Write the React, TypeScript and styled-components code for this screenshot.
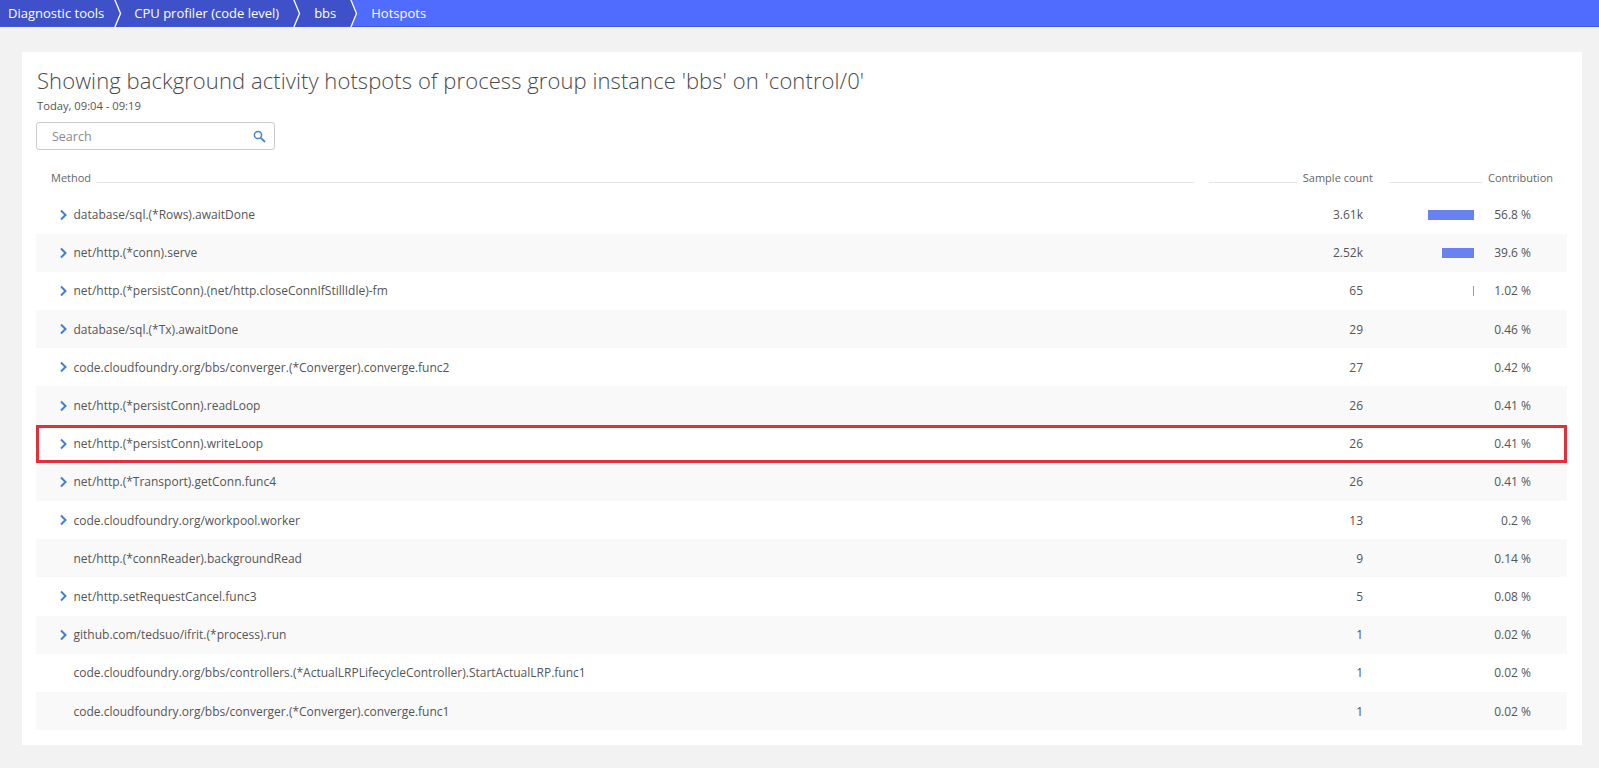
import React from "react";
import styled, { createGlobalStyle } from "styled-components";

const GlobalStyle = createGlobalStyle`
  html, body {
    margin: 0;
    padding: 0;
    background: #f2f2f2;
    font-family: "Open Sans", "Liberation Sans", sans-serif;
    color: #555;
  }
`;

const TopBar = styled.nav`
  display: flex;
  align-items: center;
  height: 27px;
  background: #4f6cff;
  color: #fff;
  font-size: 13px;
  font-weight: 500;
  border-bottom: 1px solid #3f5ae0;
  box-sizing: border-box;
`;

const Crumb = styled.div<{ $current?: boolean; $pad: number }>`
  display: flex;
  align-items: center;
  height: 100%;
  padding-left: ${(p) => p.$pad}px;
  background: ${(p) => (p.$current ? "transparent" : "#3f51c9")};
  white-space: nowrap;
`;

const CrumbArrow = styled.svg`
  display: block;
  flex: none;
  width: 14px;
  height: 27px;
`;

const CrumbGap = styled.div<{ $width: number }>`
  width: ${(p) => p.$width}px;
  flex: none;
  height: 100%;
  background: #3f51c9;
`;

const Page = styled.main`
  padding: 25px 17px 23px 22px;
`;

const Card = styled.section`
  background: #fff;
  padding: 15px 15px 14px 14px;
  height: 693px;
  box-sizing: border-box;
`;

const Title = styled.h1`
  margin: 0 0 0 1px;
  font-size: 22px;
  line-height: 26px;
  font-weight: 300;
  color: #4a4a4a;
  letter-spacing: 0.08px;
`;

const Subtitle = styled.div`
  font-size: 11.2px;
  line-height: 18px;
  margin: 4px 0 0 1px;
  color: #555;
`;

const SearchBox = styled.div`
  display: flex;
  align-items: center;
  justify-content: space-between;
  width: 239px;
  height: 28px;
  margin-top: 7px;
  box-sizing: border-box;
  padding: 0 8px 0 15px;
  border: 1px solid #c9ccd1;
  border-radius: 3px;
  font-size: 12.5px;
  color: #8a8a8a;
`;

const HeadRow = styled.div`
  display: flex;
  align-items: center;
  height: 45px;
  margin-top: 5px;
  font-size: 11px;
  color: #666;
`;

const HeadLabel = styled.div<{ $left?: number; $right?: number }>`
  flex: none;
  white-space: nowrap;
  margin-left: ${(p) => p.$left ?? 0}px;
  margin-right: ${(p) => p.$right ?? 0}px;
`;

const HeadRule = styled.div<{ $width?: number; $gap?: number }>`
  height: 1px;
  margin: 9px 6px 0 ${(p) => p.$gap ?? 2}px;
  background: #e6e6e6;
  flex: ${(p) => (p.$width ? "none" : "1")};
  width: ${(p) => (p.$width ? `${p.$width}px` : "auto")};
`;

const Rows = styled.div`
  display: flex;
  flex-direction: column;
  margin-top: -4.5px;
`;

const Row = styled.div<{ $striped: boolean; $marked: boolean }>`
  position: relative;
  z-index: ${(p) => (p.$marked ? 1 : 0)};
  display: grid;
  grid-template-columns: 1fr 100px 111px 57px;
  align-items: center;
  height: 38.2px;
  padding-right: 36px;
  box-sizing: border-box;
  font-size: 12px;
  color: #555;
  background: ${(p) => (p.$striped ? "#f9f9f9" : "#fff")};
  ${(p) =>
    p.$marked
      ? "outline: 3px solid #e0303a; outline-offset: -3px; background: #fff;"
      : ""}
`;

const MethodCell = styled.div`
  display: flex;
  align-items: center;
  padding-left: 22.5px;
  gap: 6px;
  white-space: nowrap;
`;

const Expander = styled.svg<{ $hidden: boolean }>`
  width: 9px;
  height: 12px;
  flex: none;
  visibility: ${(p) => (p.$hidden ? "hidden" : "visible")};
`;

const CountCell = styled.div`
  text-align: right;
`;

const BarCell = styled.div`
  display: flex;
  justify-content: flex-end;
  align-items: center;
`;

const Bar = styled.div`
  height: 10px;
  background: #6a81f0;
`;

const ThinBar = styled.div`
  width: 1px;
  height: 10px;
  background: #999;
`;

const PercentCell = styled.div`
  text-align: right;
  white-space: nowrap;
`;

type Hotspot = {
  method: string;
  samples: string;
  percent: string;
  expandable: boolean;
  bar?: number;
};

const hotspots: Hotspot[] = [
  { method: "database/sql.(*Rows).awaitDone", samples: "3.61k", percent: "56.8 %", expandable: true, bar: 46 },
  { method: "net/http.(*conn).serve", samples: "2.52k", percent: "39.6 %", expandable: true, bar: 32 },
  { method: "net/http.(*persistConn).(net/http.closeConnIfStillIdle)-fm", samples: "65", percent: "1.02 %", expandable: true, bar: 1 },
  { method: "database/sql.(*Tx).awaitDone", samples: "29", percent: "0.46 %", expandable: true },
  { method: "code.cloudfoundry.org/bbs/converger.(*Converger).converge.func2", samples: "27", percent: "0.42 %", expandable: true },
  { method: "net/http.(*persistConn).readLoop", samples: "26", percent: "0.41 %", expandable: true },
  { method: "net/http.(*persistConn).writeLoop", samples: "26", percent: "0.41 %", expandable: true },
  { method: "net/http.(*Transport).getConn.func4", samples: "26", percent: "0.41 %", expandable: true },
  { method: "code.cloudfoundry.org/workpool.worker", samples: "13", percent: "0.2 %", expandable: true },
  { method: "net/http.(*connReader).backgroundRead", samples: "9", percent: "0.14 %", expandable: false },
  { method: "net/http.setRequestCancel.func3", samples: "5", percent: "0.08 %", expandable: true },
  { method: "github.com/tedsuo/ifrit.(*process).run", samples: "1", percent: "0.02 %", expandable: true },
  { method: "code.cloudfoundry.org/bbs/controllers.(*ActualLRPLifecycleController).StartActualLRP.func1", samples: "1", percent: "0.02 %", expandable: false },
  { method: "code.cloudfoundry.org/bbs/converger.(*Converger).converge.func1", samples: "1", percent: "0.02 %", expandable: false },
];

const Arrow = ({ last }: { last?: boolean }) => (
  <CrumbArrow viewBox="0 0 14 27">
    <polygon points="0,0 2,0 8,13.5 2,27 0,27" fill="#3f51c9" />
    {last ? null : <polygon points="2.6,0 14,0 14,27 2.6,27 8.6,13.5" fill="#3f51c9" />}
    <polyline points="1.5,-1 7.5,13.5 1.5,28" fill="none" stroke="#fff" strokeWidth="1.3" />
  </CrumbArrow>
);

const SearchIcon = () => (
  <svg width="13" height="13" viewBox="0 0 13 13">
    <circle cx="5" cy="5" r="3.6" fill="none" stroke="#4a7fd0" strokeWidth="1.5" />
    <line x1="7.8" y1="7.8" x2="12" y2="12" stroke="#4a7fd0" strokeWidth="1.8" />
  </svg>
);

export default function App() {
  return (
    <>
      <GlobalStyle />
      <TopBar>
        <Crumb $pad={8}>Diagnostic tools</Crumb>
        <CrumbGap $width={9} />
        <Arrow />
        <Crumb $pad={7}>CPU profiler (code level)</Crumb>
        <CrumbGap $width={13} />
        <Arrow />
        <Crumb $pad={8}>bbs</Crumb>
        <CrumbGap $width={13} />
        <Arrow last />
        <Crumb $current $pad={8}>Hotspots</Crumb>
      </TopBar>
      <Page>
        <Card>
          <Title>Showing background activity hotspots of process group instance 'bbs' on 'control/0'</Title>
          <Subtitle>Today, 09:04 - 09:19</Subtitle>
          <SearchBox>
            Search
            <SearchIcon />
          </SearchBox>
          <HeadRow>
            <HeadLabel $left={15}>Method</HeadLabel>
            <HeadRule $gap={5} />
            <HeadRule $width={88} $gap={9} />
            <HeadLabel>Sample count</HeadLabel>
            <HeadRule $width={93} $gap={16} />
            <HeadLabel $right={14}>Contribution</HeadLabel>
          </HeadRow>
          <Rows>
            {hotspots.map((h, i) => (
              <Row key={h.method} $striped={i % 2 === 1} $marked={i === 6}>
                <MethodCell>
                  <Expander $hidden={!h.expandable} viewBox="0 0 9 12">
                    <polyline points="2,1.5 6.5,6 2,10.5" fill="none" stroke="#3f7fd6" strokeWidth="2" />
                  </Expander>
                  {h.method}
                </MethodCell>
                <CountCell>{h.samples}</CountCell>
                <BarCell>
                  {h.bar === 1 ? <ThinBar /> : h.bar ? <Bar style={{ width: h.bar }} /> : null}
                </BarCell>
                <PercentCell>{h.percent}</PercentCell>
              </Row>
            ))}
          </Rows>
        </Card>
      </Page>
    </>
  );
}
